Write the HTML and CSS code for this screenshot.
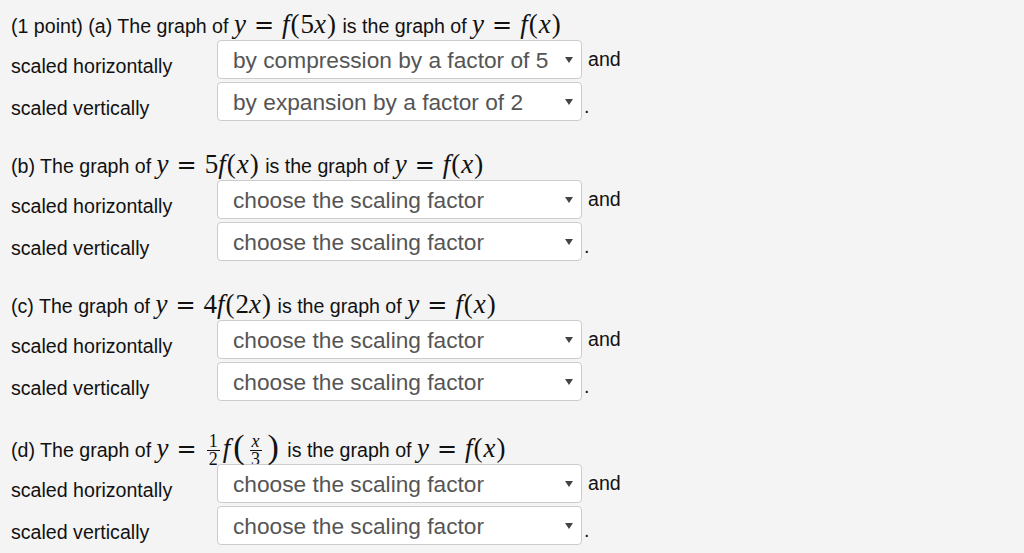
FILE: index.html
```html
<!DOCTYPE html>
<html>
<head>
<meta charset="utf-8">
<link rel="stylesheet" href="styles.css">
</head>
<body>
<div class="page">
  <div class="section">
    <div class="title">(1 point) (a) The graph of <span class="math"><i>y</i><span class="eq">=</span><i>f</i><span class="p">(</span>5<i>x</i><span class="p">)</span></span> is the graph of <span class="math"><i>y</i><span class="eq">=</span><i>f</i><span class="p">(</span><i>x</i><span class="p">)</span></span></div>
    <div class="row">
      <div class="label">scaled horizontally</div>
      <div class="select"><span class="val">by compression by a factor of 5</span><span class="arrow"></span></div>
      <div class="after">and</div>
    </div>
    <div class="row">
      <div class="label">scaled vertically</div>
      <div class="select"><span class="val">by expansion by a factor of 2</span><span class="arrow"></span></div>
      <div class="after dot">.</div>
    </div>
  </div>

  <div class="section">
    <div class="title">(b) The graph of <span class="math"><i>y</i><span class="eq">=</span>5<i>f</i><span class="p">(</span><i>x</i><span class="p">)</span></span> is the graph of <span class="math"><i>y</i><span class="eq">=</span><i>f</i><span class="p">(</span><i>x</i><span class="p">)</span></span></div>
    <div class="row">
      <div class="label">scaled horizontally</div>
      <div class="select"><span class="val">choose the scaling factor</span><span class="arrow"></span></div>
      <div class="after">and</div>
    </div>
    <div class="row">
      <div class="label">scaled vertically</div>
      <div class="select"><span class="val">choose the scaling factor</span><span class="arrow"></span></div>
      <div class="after dot">.</div>
    </div>
  </div>

  <div class="section">
    <div class="title">(c) The graph of <span class="math"><i>y</i><span class="eq">=</span>4<i>f</i><span class="p">(</span>2<i>x</i><span class="p">)</span></span> is the graph of <span class="math"><i>y</i><span class="eq">=</span><i>f</i><span class="p">(</span><i>x</i><span class="p">)</span></span></div>
    <div class="row">
      <div class="label">scaled horizontally</div>
      <div class="select"><span class="val">choose the scaling factor</span><span class="arrow"></span></div>
      <div class="after">and</div>
    </div>
    <div class="row">
      <div class="label">scaled vertically</div>
      <div class="select"><span class="val">choose the scaling factor</span><span class="arrow"></span></div>
      <div class="after dot">.</div>
    </div>
  </div>

  <div class="section">
    <div class="title title-frac">(d) The graph of <span class="math"><i>y</i><span class="eq">=</span><span class="frac"><span class="num">1</span><span class="den">2</span></span><i>f</i><span class="bigp">(</span><span class="frac"><span class="num"><i>x</i></span><span class="den">3</span></span><span class="bigp">)</span></span> is the graph of <span class="math"><i>y</i><span class="eq">=</span><i>f</i><span class="p">(</span><i>x</i><span class="p">)</span></span></div>
    <div class="row">
      <div class="label">scaled horizontally</div>
      <div class="select"><span class="val">choose the scaling factor</span><span class="arrow"></span></div>
      <div class="after">and</div>
    </div>
    <div class="row">
      <div class="label">scaled vertically</div>
      <div class="select"><span class="val">choose the scaling factor</span><span class="arrow"></span></div>
      <div class="after dot">.</div>
    </div>
  </div>
</div>
</body>
</html>
```

FILE: styles.css
```css
html, body {
  margin: 0;
  padding: 0;
  background: #f4f4f4;
}
body {
  width: 1024px;
  height: 553px;
  overflow: hidden;
  font-family: "Liberation Sans", Arial, sans-serif;
  font-size: 19.6px;
  color: #111;
}
.page {
  padding: 9px 0 0 11px;
}
.section {
  margin-bottom: 28px;
}
.title {
  height: 31px;
  line-height: 30px;
  white-space: nowrap;
}
.title-frac {
  height: 35px;
  line-height: 33px;
}
.math {
  font-family: "Liberation Serif", "DejaVu Serif", serif;
  font-size: 27px;
}
.math i {
  font-style: italic;
}
.math .p {
  margin: 0 1px;
}
.eq {
  font-family: "DejaVu Sans", sans-serif;
  font-size: 24px;
  margin: 0 8px;
}
.frac {
  display: inline-flex;
  flex-direction: column;
  align-items: center;
  vertical-align: middle;
  font-size: 18px;
  line-height: 15px;
  margin: 0 3px 0 2px;
}
.frac .num {
  border-bottom: 1px solid #111;
  padding: 0 2px 1px;
}
.frac .den {
  padding-top: 1px;
}
.bigp {
  font-size: 34px;
  margin: 0 3px;
  position: relative;
  top: 1px;
}
.row {
  display: flex;
  align-items: flex-start;
  height: 39px;
  margin-bottom: 3px;
}
.label {
  width: 206px;
  flex: none;
  padding-top: 16px;
  line-height: 20px;
}
.select {
  flex: none;
  box-sizing: border-box;
  width: 365px;
  height: 39px;
  background: #fff;
  border: 1px solid #cccccc;
  border-radius: 4px;
  display: flex;
  align-items: center;
  padding: 0 0 0 15px;
  font-size: 22.7px;
  color: #555;
}
.val {
  flex: 1;
  white-space: nowrap;
  padding-top: 1px;
}
.arrow {
  width: 0;
  height: 0;
  border-left: 4px solid transparent;
  border-right: 4px solid transparent;
  border-top: 6px solid #444;
  margin-right: 8px;
}
.after {
  padding: 9px 0 0 6px;
  line-height: 20px;
}
.after.dot {
  padding-top: 14px;
  padding-left: 2px;
}
```
